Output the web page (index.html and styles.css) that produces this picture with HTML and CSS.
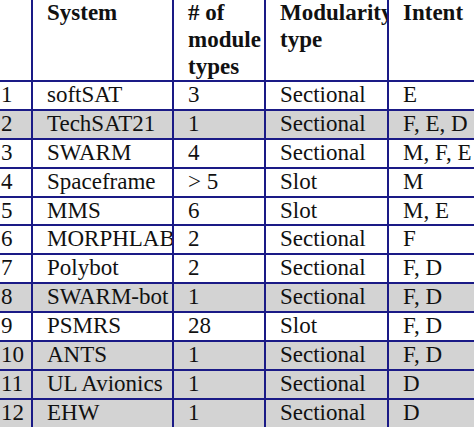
FILE: index.html
```html
<!DOCTYPE html>
<html>
<head>
<meta charset="utf-8">
<link rel="stylesheet" href="styles.css">
</head>
<body>
<div class="viewport">
  <div class="grid">
    <div class="cell head"></div>
    <div class="cell head">System</div>
    <div class="cell head">#&nbsp;of<br>module<br>types</div>
    <div class="cell head">Modularity<br>type</div>
    <div class="cell head">Intent</div>

    <div class="cell">1</div><div class="cell">softSAT</div><div class="cell">3</div><div class="cell">Sectional</div><div class="cell">E</div>
    <div class="cell gray">2</div><div class="cell gray">TechSAT21</div><div class="cell gray">1</div><div class="cell gray">Sectional</div><div class="cell gray">F, E, D</div>
    <div class="cell">3</div><div class="cell">SWARM</div><div class="cell">4</div><div class="cell">Sectional</div><div class="cell">M, F, E</div>
    <div class="cell">4</div><div class="cell">Spaceframe</div><div class="cell">&gt; 5</div><div class="cell">Slot</div><div class="cell">M</div>
    <div class="cell">5</div><div class="cell">MMS</div><div class="cell">6</div><div class="cell">Slot</div><div class="cell">M, E</div>
    <div class="cell">6</div><div class="cell">MORPHLAB</div><div class="cell">2</div><div class="cell">Sectional</div><div class="cell">F</div>
    <div class="cell">7</div><div class="cell">Polybot</div><div class="cell">2</div><div class="cell">Sectional</div><div class="cell">F, D</div>
    <div class="cell gray">8</div><div class="cell gray">SWARM-bot</div><div class="cell gray">1</div><div class="cell gray">Sectional</div><div class="cell gray">F, D</div>
    <div class="cell">9</div><div class="cell">PSMRS</div><div class="cell">28</div><div class="cell">Slot</div><div class="cell">F, D</div>
    <div class="cell gray">10</div><div class="cell gray">ANTS</div><div class="cell gray">1</div><div class="cell gray">Sectional</div><div class="cell gray">F, D</div>
    <div class="cell gray">11</div><div class="cell gray">UL Avionics</div><div class="cell gray">1</div><div class="cell gray">Sectional</div><div class="cell gray">D</div>
    <div class="cell gray">12</div><div class="cell gray">EHW</div><div class="cell gray">1</div><div class="cell gray">Sectional</div><div class="cell gray">D</div>
  </div>
</div>
</body>
</html>
```
FILE: styles.css
```css
html, body {
  margin: 0;
  padding: 0;
  background: #ffffff;
  overflow: hidden;
}

.viewport {
  width: 474px;
  height: 427px;
  overflow: hidden;
}

.grid {
  display: grid;
  grid-template-columns: 44px 139px 90px 121px 140px;
  grid-template-rows: 90px repeat(12, 26.9px);
  gap: 2px;
  padding: 2px;
  background: #1a1a86;
  margin-left: -15px;
  margin-top: -12px;
  width: max-content;
  font-family: "Liberation Serif", "Times New Roman", serif;
  color: #111111;
}

.cell {
  background: #ffffff;
  font-size: 23px;
  line-height: 26.9px;
  padding-left: 14px;
  white-space: nowrap;
  overflow: hidden;
}

.cell.gray {
  background: #d3d3d3;
}

.cell.head {
  font-weight: bold;
  line-height: 27px;
  padding-top: 9px;
}
```
